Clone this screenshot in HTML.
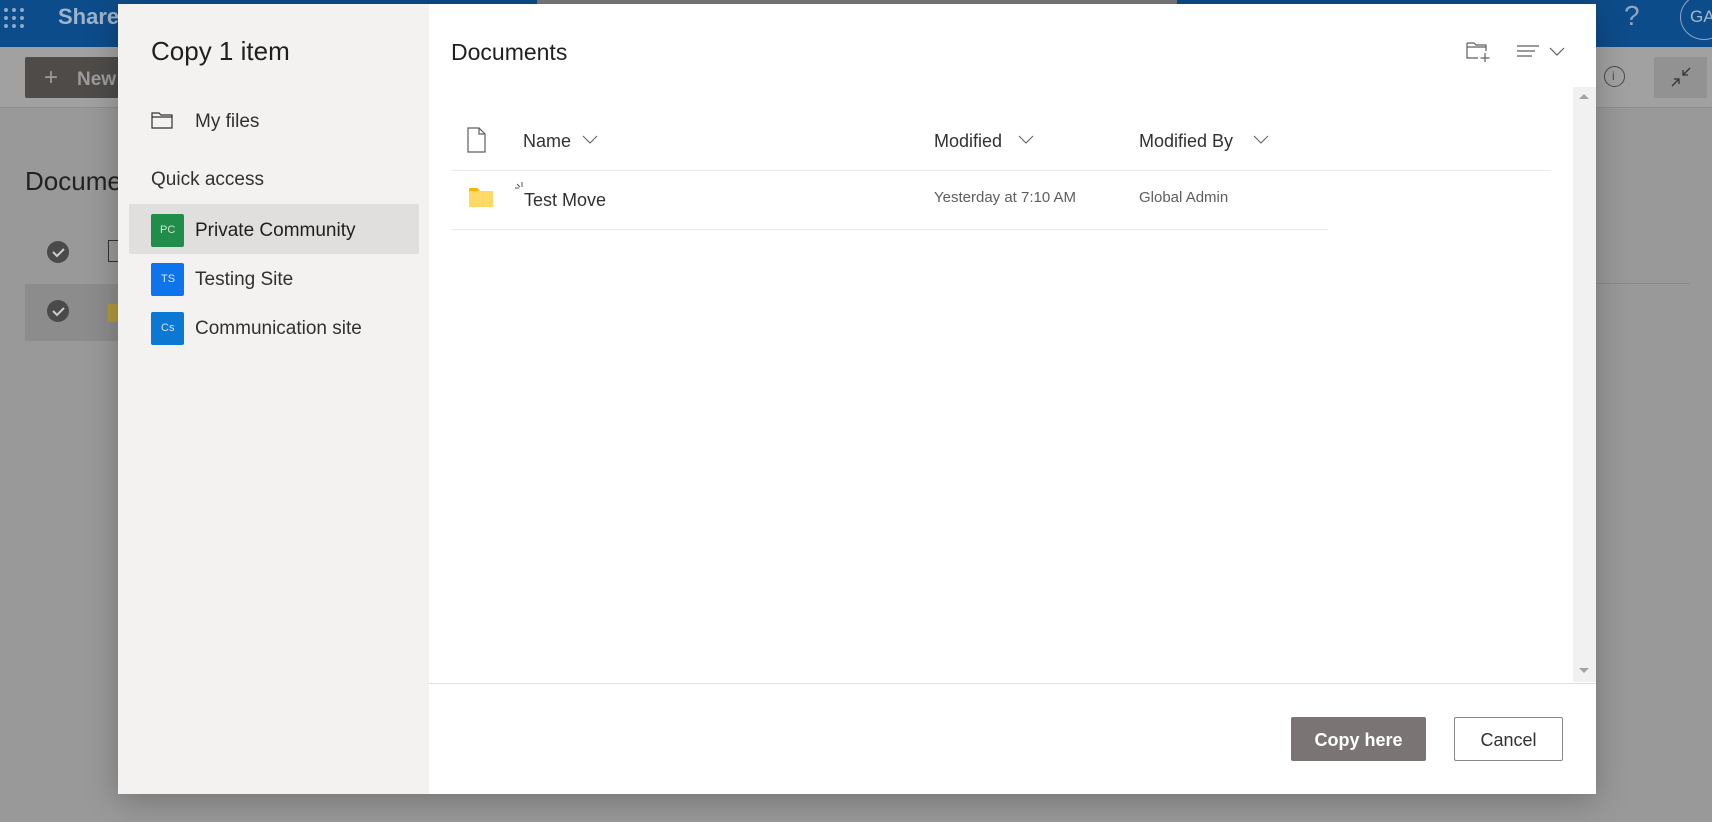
<!DOCTYPE html>
<html><head><meta charset="utf-8"><style>
*{box-sizing:border-box;margin:0;padding:0}
body{width:1712px;height:822px;overflow:hidden;background:#999;font-family:"Liberation Sans",sans-serif;position:relative;color:#323130}
.a{position:absolute}
.t{position:absolute;white-space:nowrap;line-height:1}
</style></head><body>
<!-- background page -->
<div class="a" style="left:0;top:0;width:1712px;height:47px;background:#0d4c8a"></div>
<div class="a" style="left:537px;top:0;width:640px;height:4px;background:#7b7b7b"></div>
<svg class="a" style="left:2px;top:6px" width="24" height="22"><g fill="#8fa9c6"><circle cx="4" cy="4" r="2"/><circle cx="12" cy="4" r="2"/><circle cx="20" cy="4" r="2"/><circle cx="4" cy="12" r="2"/><circle cx="12" cy="12" r="2"/><circle cx="20" cy="12" r="2"/><circle cx="4" cy="20" r="2"/><circle cx="12" cy="20" r="2"/><circle cx="20" cy="20" r="2"/></g></svg>
<div class="t" style="left:58px;top:6px;font-size:22px;font-weight:bold;color:#9eb3cc">SharePoint</div>
<div class="t" style="left:1624px;top:2px;font-size:28px;color:#8ea6c0">?</div>
<div class="a" style="left:1680px;top:-6px;width:48px;height:46px;border:1px solid #8ea6c0;border-radius:50%"></div>
<div class="t" style="left:1690px;top:8px;font-size:17px;color:#a7b8cc">GA</div>
<div class="a" style="left:0;top:47px;width:1712px;height:61px;background:#a1a1a1;border-bottom:1px solid #8e8e8e"></div>
<div class="a" style="left:25px;top:57px;width:100px;height:41px;background:#4e4b49;border-radius:2px"></div>
<div class="t" style="left:44px;top:66px;font-size:24px;color:#9c9c9c">+</div>
<div class="t" style="left:77px;top:70px;font-size:19px;font-weight:bold;color:#9c9c9c">New</div>
<div class="a" style="left:1604px;top:66px;width:21px;height:21px;border:1.5px solid #4a4a4a;border-radius:50%"></div>
<div class="t" style="left:1612px;top:70px;font-size:12px;color:#4a4a4a">i</div>
<div class="a" style="left:1654px;top:57px;width:53px;height:41px;background:#929292"></div>
<svg class="a" style="left:1670px;top:66px" width="22" height="22" stroke="#333" fill="none" stroke-width="1.3"><path d="M2 20L9 13M4 13h5v5M20 2l-7 7M13 4v5h5"/></svg>
<div class="a" style="left:0;top:108px;width:1712px;height:714px;background:#999"></div>
<div class="t" style="left:25px;top:168px;font-size:26px;color:#222">Documents</div>
<div class="a" style="left:25px;top:284px;width:100px;height:57px;background:#8c8c8c"></div>
<div class="a" style="left:1596px;top:283px;width:94px;height:1px;background:#8a8a8a"></div>
<div class="a" style="left:47px;top:241px;width:22px;height:22px;background:#4a4a4a;border-radius:50%"></div>
<div class="a" style="left:47px;top:300px;width:22px;height:22px;background:#4a4a4a;border-radius:50%"></div>
<svg class="a" style="left:47px;top:241px" width="22" height="81" stroke="#ccc" fill="none" stroke-width="2"><path d="M6 11l4 4 7-7M6 70l4 4 7-7"/></svg>
<div class="a" style="left:108px;top:240px;width:12px;height:22px;border:1.5px solid #333"></div>
<div class="a" style="left:108px;top:304px;width:12px;height:18px;background:#b39a3c"></div>
<!-- dialog -->
<div class="a" style="left:118px;top:4px;width:1478px;height:790px;background:#fff;box-shadow:0 6px 30px rgba(0,0,0,.25)"></div>
<div class="a" style="left:118px;top:4px;width:311px;height:790px;background:#f3f2f1"></div>
<div class="t" style="left:151px;top:38px;font-size:26px;color:#201f1e">Copy 1 item</div>
<svg class="a" style="left:151px;top:111px" width="22" height="18" fill="none" stroke="#323130" stroke-width="1.2"><path d="M1 2h7l2 2h11v13H1zM1 6h20"/></svg>
<div class="t" style="left:195px;top:112px;font-size:19px;color:#323130">My files</div>
<div class="t" style="left:151px;top:170px;font-size:19px;color:#323130">Quick access</div>
<div class="a" style="left:129px;top:204px;width:290px;height:50px;background:#e1dfdd;border-radius:2px"></div>
<div class="a" style="left:151px;top:214px;width:33px;height:33px;background:#218d4b;border-radius:2px"></div>
<div class="t" style="left:160px;top:225px;font-size:11px;color:#cfe5d6">PC</div>
<div class="t" style="left:195px;top:221px;font-size:19px;color:#201f1e">Private Community</div>
<div class="a" style="left:151px;top:263px;width:33px;height:33px;background:#0f73ec;border-radius:2px"></div>
<div class="t" style="left:161px;top:274px;font-size:11px;color:#d4e5fb">TS</div>
<div class="t" style="left:195px;top:270px;font-size:19px;color:#323130">Testing Site</div>
<div class="a" style="left:151px;top:312px;width:33px;height:33px;background:#0b78d4;border-radius:2px"></div>
<div class="t" style="left:161px;top:323px;font-size:11px;color:#d4e5fb">Cs</div>
<div class="t" style="left:195px;top:319px;font-size:19px;color:#323130">Communication site</div>
<!-- right pane -->
<div class="t" style="left:451px;top:41px;font-size:23px;color:#201f1e">Documents</div>
<svg class="a" style="left:1466px;top:40px" width="26" height="24" fill="none" stroke="#605e5c" stroke-width="1.2"><path d="M1 3h7l2 2h10v6M1 3v15h11M1 7h19M19 13v9M14.5 18h9"/></svg>
<svg class="a" style="left:1516px;top:44px" width="52" height="16" fill="none" stroke="#605e5c" stroke-width="1.2"><path d="M1 2h22M1 7h18M1 12h15M34 4l7 7 7-7"/></svg>
<div class="a" style="left:1573px;top:87px;width:23px;height:595px;background:#f1f1f1"></div>
<svg class="a" style="left:1578px;top:92px" width="12" height="590" fill="#a3a3a3"><path d="M1 7l5-5 5 5zM1 576l5 5 5-5z"/></svg>
<svg class="a" style="left:467px;top:127px" width="20" height="26" fill="none" stroke="#605e5c" stroke-width="1.2"><path d="M1 1h11l6 6v18H1zM12 1v6h6"/></svg>
<div class="t" style="left:523px;top:132px;font-size:18px;color:#323130">Name</div>
<div class="t" style="left:934px;top:132px;font-size:18px;color:#323130">Modified</div>
<div class="t" style="left:1139px;top:132px;font-size:18px;color:#323130">Modified By</div>
<svg class="a" style="left:582px;top:135px" width="700" height="10" fill="none" stroke="#605e5c" stroke-width="1"><path d="M1 1l7 7 7-7M437 1l7 7 7-7M672 1l7 7 7-7"/></svg>
<div class="a" style="left:451px;top:170px;width:1100px;height:1px;background:#edebe9"></div>
<svg class="a" style="left:468px;top:186px" width="28" height="24"><path d="M1 4a2 2 0 012-2h6l3 3h13v16H1z" fill="#ffd866"/><path d="M1 4a2 2 0 012-2h6l3 3H1z" fill="#f4b400"/></svg>
<svg class="a" style="left:514px;top:182px" width="10" height="10" stroke="#555" stroke-width="1"><path d="M8 0v5M1 6h4M3 2l3 3"/></svg>
<div class="t" style="left:524px;top:191px;font-size:18px;color:#323130">Test Move</div>
<div class="t" style="left:934px;top:190px;font-size:15px;color:#605e5c">Yesterday at 7:10 AM</div>
<div class="t" style="left:1139px;top:190px;font-size:15px;color:#605e5c">Global Admin</div>
<div class="a" style="left:451px;top:229px;width:877px;height:1px;background:#edebe9"></div>
<!-- footer -->
<div class="a" style="left:429px;top:683px;width:1167px;height:1px;background:#e1dfdd"></div>
<div class="a" style="left:1291px;top:717px;width:135px;height:44px;background:#7a7574;border-radius:2px"></div>
<div class="t" style="left:1291px;top:731px;width:135px;text-align:center;font-size:18px;font-weight:bold;color:#fff">Copy here</div>
<div class="a" style="left:1454px;top:717px;width:109px;height:44px;border:1px solid #8a8886;border-radius:2px;background:#fff"></div>
<div class="t" style="left:1454px;top:731px;width:109px;text-align:center;font-size:18px;color:#323130">Cancel</div>
</body></html>
